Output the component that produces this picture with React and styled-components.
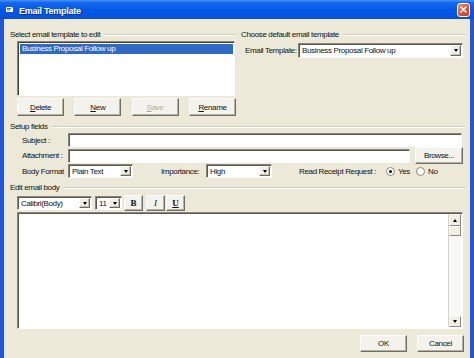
import React from "react";
import styled, { createGlobalStyle } from "styled-components";

const GlobalStyle = createGlobalStyle`
  html, body {
    margin: 0;
    padding: 0;
    background: #ece9d8;
  }
`;

const Window = styled.div`
    width: 474px;
    height: 358px;
    display: flex;
    flex-direction: column;
    overflow: hidden;
    background: #ece9d8;
    font-family: "Liberation Sans", Arial, sans-serif;
    font-size: 8px;
    letter-spacing: -0.35px;
    color: #111;
`;

const TitleBar = styled.div`
    height: 19px;
    flex: none;
    display: flex;
    align-items: center;
    padding: 0 4px 0 5px;
    background: linear-gradient(#4a94f8 0%, #1468ec 14%, #0558e6 50%, #0553e0 85%, #0a4dd0 100%);
`;

const Title = styled.span`
    margin-left: 5px;
    padding-top: 2px;
    color: #fff;
    font-size: 9px;
    font-weight: bold;
    letter-spacing: -0.25px;
    text-shadow: 1px 1px 0 #0a2f8a;
`;

const CloseButton = styled.div`
    margin-left: auto;
    width: 11px;
    height: 12px;
    border: 1px solid #fff;
    border-radius: 3px;
    background: linear-gradient(135deg, #f08a68 0%, #dd5434 55%, #c23c1c 100%);
    display: flex;
    align-items: center;
    justify-content: center;
`;

const Frame = styled.div`
    flex: 1;
    display: flex;
    flex-direction: column;
    border-left: 4px solid #2356d8;
    border-right: 4px solid #2356d8;
    padding: 10px 5px 0 6px;
`;

const TopRow = styled.div`
    display: flex;
    gap: 5px;
`;

const Group = styled.div`
    display: flex;
    flex-direction: column;
    width: ${p => p.$width ? `${p.$width}px` : "auto"};
    flex: ${p => p.$width ? "none" : 1};
`;

const GroupHeader = styled.div`
    height: 10px;
    display: flex;
    align-items: center;
    gap: 4px;
    margin-top: ${p => p.$top || 0}px;
`;

const GroupLine = styled.div`
    flex: 1;
    height: 0;
    border-top: 1px solid #d0cdbd;
    border-bottom: 1px solid #fff;
    margin-top: 1px;
`;

const ListBox = styled.div`
    margin: 2px 0 0 7px;
    width: 214px;
    height: 51px;
    padding: 1px;
    background: #fff;
    border: 1px solid;
    border-color: #8a877a #fff #fff #8a877a;
    box-shadow: inset 1px 1px 0 #404040;
`;

const ListItem = styled.div`
    height: 10px;
    line-height: 10px;
    padding-left: 2px;
    margin: 1px 0 0 1px;
    background: ${p => p.$selected ? "#316ac5" : "transparent"};
    color: ${p => p.$selected ? "#fff" : "#000"};
`;

const ButtonRow = styled.div`
    margin: 2px 0 0 7px;
    display: flex;
    justify-content: space-between;
`;

const Button = styled.div`
    box-sizing: border-box;
    width: ${p => p.$width || 47}px;
    height: ${p => p.$height || 18}px;
    display: flex;
    align-items: center;
    justify-content: center;
    background: #f3f2ec;
    border: 1px solid;
    border-color: #fff #716f64 #716f64 #fff;
    box-shadow: inset -1px -1px 0 #b5b2a3;
    color: ${p => p.$disabled ? "#aca899" : "#111"};
    text-shadow: ${p => p.$disabled ? "1px 1px 0 #fff" : "none"};
    flex: none;
`;

const FieldRow = styled.div`
    display: flex;
    align-items: center;
    height: ${p => p.$height || 14}px;
    margin-top: ${p => p.$top || 0}px;
    padding-left: ${p => p.$indent || 0}px;
`;

const Label = styled.span`
    width: ${p => p.$width}px;
    margin-left: ${p => p.$left || 0}px;
    flex: none;
    white-space: nowrap;
`;

const Input = styled.div`
    box-sizing: border-box;
    width: ${p => p.$width}px;
    height: 14px;
    flex: none;
    background: #fff;
    border: 1px solid;
    border-color: #8a877a #fff #fff #8a877a;
    box-shadow: inset 1px 1px 0 #5a5850;
`;

const Combo = styled.div`
    box-sizing: border-box;
    width: ${p => p.$width}px;
    height: ${p => p.$height || 14}px;
    flex: none;
    display: flex;
    align-items: center;
    background: #fff;
    border: 1px solid;
    border-color: #8a877a #fff #fff #8a877a;
    box-shadow: inset 1px 1px 0 #5a5850;
    padding: 1px 1px 1px 2px;
`;

const ComboText = styled.span`
    flex: 1;
    padding-left: 1px;
    white-space: nowrap;
    overflow: hidden;
`;

const ArrowButton = styled.div`
    box-sizing: border-box;
    width: 11px;
    height: 100%;
    display: flex;
    align-items: center;
    justify-content: center;
    background: #f1efe5;
    border: 1px solid;
    border-color: #fff #6e6c62 #6e6c62 #fff;
    box-shadow: inset -1px -1px 0 #c2bfb0;
`;

const Triangle = styled.span`
    width: 0;
    height: 0;
    border-left: 2.5px solid transparent;
    border-right: 2.5px solid transparent;
    border-${p => p.$up ? "bottom" : "top"}: 3px solid #000;
`;

const RadioGroup = styled.div`
    display: flex;
    align-items: center;
`;

const Radio = styled.span`
    box-sizing: border-box;
    width: 9px;
    height: 9px;
    border-radius: 50%;
    border: 1px solid #8c8a7e;
    background: #fff;
    display: flex;
    align-items: center;
    justify-content: center;
    margin-left: ${p => p.$left || 0}px;
    &::after {
        content: "";
        width: 3px;
        height: 3px;
        border-radius: 50%;
        background: ${p => p.$checked ? "#000" : "transparent"};
    }
`;

const RadioText = styled.span`
    margin-left: 3px;
`;

const Toolbar = styled.div`
    display: flex;
    align-items: center;
    height: 16px;
    margin: 3px 0 0 7px;
`;

const StyleButton = styled.div`
    box-sizing: border-box;
    width: 19px;
    height: 16px;
    margin-left: ${p => p.$left || 0}px;
    display: flex;
    align-items: center;
    justify-content: center;
    background: #f3f2ec;
    border: 1px solid;
    border-color: #fff #716f64 #716f64 #fff;
    box-shadow: inset -1px -1px 0 #b5b2a3;
    font-family: "Liberation Serif", "Times New Roman", serif;
    font-size: 9px;
    letter-spacing: 0;
    font-weight: ${p => p.$italic ? "normal" : "bold"};
    font-style: ${p => p.$italic ? "italic" : "normal"};
    text-decoration: ${p => p.$underline ? "underline" : "none"};
`;

const Editor = styled.div`
    box-sizing: border-box;
    margin: 1px 0 0 7px;
    width: 446px;
    height: 117px;
    display: flex;
    justify-content: flex-end;
    background: #fff;
    border: 1px solid;
    border-color: #8a877a #fff #fff #8a877a;
    box-shadow: inset 1px 1px 0 #5a5850;
    padding: 1px 1px 1px 0;
`;

const ScrollBar = styled.div`
    width: 12px;
    display: flex;
    flex-direction: column;
    background: #f9f8f4;
    border-left: 1px solid #d6d3c6;
`;

const ScrollButton = styled.div`
    box-sizing: border-box;
    height: ${p => p.$height || 11}px;
    display: flex;
    align-items: center;
    justify-content: center;
    background: #f1efe5;
    border: 1px solid;
    border-color: #fff #8c8a7e #8c8a7e #fff;
    flex: none;
`;

const ScrollTrack = styled.div`
    flex: 1;
`;

const Footer = styled.div`
    display: flex;
    justify-content: flex-end;
    gap: 10px;
    margin-top: 6px;
    padding-right: 1px;
`;

const TitleIcon = () => (
    <svg width="9" height="8" viewBox="0 0 9 8">
        <path d="M1 1 H7 L8 2 V6 H1 Z" fill="#fff" />
        <path d="M2 2.5 H6 M2 4 H5" stroke="#2a5bd6" strokeWidth="1" />
    </svg>
);

const CloseIcon = () => (
    <svg width="7" height="7" viewBox="0 0 7 7">
        <path d="M1 1 L6 6 M6 1 L1 6" stroke="#fff" strokeWidth="1.6" strokeLinecap="round" />
    </svg>
);

const DropDown = ({ width, text, height }) => (
    <Combo $width={width} $height={height}>
        <ComboText>{text}</ComboText>
        <ArrowButton><Triangle /></ArrowButton>
    </Combo>
);

export default function App() {
    return (
        <Window>
            <GlobalStyle />
            <TitleBar>
                <TitleIcon />
                <Title>Email Template</Title>
                <CloseButton><CloseIcon /></CloseButton>
            </TitleBar>
            <Frame>
                <TopRow>
                    <Group $width={226}>
                        <GroupHeader>
                            <span>Select email template to edit</span>
                            <GroupLine />
                        </GroupHeader>
                        <ListBox>
                            <ListItem $selected>Business Proposal Follow up</ListItem>
                        </ListBox>
                        <ButtonRow>
                            <Button><span><u>D</u>elete</span></Button>
                            <Button><span><u>N</u>ew</span></Button>
                            <Button $disabled><span><u>S</u>ave</span></Button>
                            <Button><span><u>R</u>ename</span></Button>
                        </ButtonRow>
                    </Group>
                    <Group>
                        <GroupHeader>
                            <span>Choose default email template</span>
                            <GroupLine />
                        </GroupHeader>
                        <FieldRow $height={15} $top={4} $indent={4}>
                            <Label $width={53}>Email Template:</Label>
                            <DropDown width={165} height={15} text="Business Proposal Follow up" />
                        </FieldRow>
                    </Group>
                </TopRow>

                <GroupHeader $top={5}>
                    <span>Setup fields</span>
                    <GroupLine />
                </GroupHeader>
                <FieldRow $top={2} $indent={12}>
                    <Label $width={46}>Subject :</Label>
                    <Input $width={394} />
                </FieldRow>
                <FieldRow $height={17} $indent={12}>
                    <Label $width={46}>Attachment :</Label>
                    <Input $width={342} />
                    <Label $width={5} />
                    <Button $width={48} $height={17}>Browse...</Button>
                </FieldRow>
                <FieldRow $indent={12}>
                    <Label $width={46}>Body Format</Label>
                    <DropDown width={65} text="Plain Text" />
                    <Label $width={45} $left={28}>Importance:</Label>
                    <DropDown width={66} text="High" />
                    <Label $width={87} $left={27}>Read Receipt Request :</Label>
                    <RadioGroup>
                        <Radio $checked />
                        <RadioText>Yes</RadioText>
                        <Radio $left={6} />
                        <RadioText>No</RadioText>
                    </RadioGroup>
                </FieldRow>

                <GroupHeader $top={4}>
                    <span>Edit email body</span>
                    <GroupLine />
                </GroupHeader>
                <Toolbar>
                    <DropDown width={75} text="Calibri(Body)" />
                    <Label $width={3} />
                    <DropDown width={27} text="11" />
                    <StyleButton $left={2}>B</StyleButton>
                    <StyleButton $left={3} $italic>I</StyleButton>
                    <StyleButton $left={1} $underline>U</StyleButton>
                </Toolbar>
                <Editor>
                    <ScrollBar>
                        <ScrollButton $height={12}><Triangle $up /></ScrollButton>
                        <ScrollButton $height={10} />
                        <ScrollTrack />
                        <ScrollButton $height={11}><Triangle /></ScrollButton>
                    </ScrollBar>
                </Editor>

                <Footer>
                    <Button $height={17}>OK</Button>
                    <Button $height={17}>Cancel</Button>
                </Footer>
            </Frame>
        </Window>
    );
}
